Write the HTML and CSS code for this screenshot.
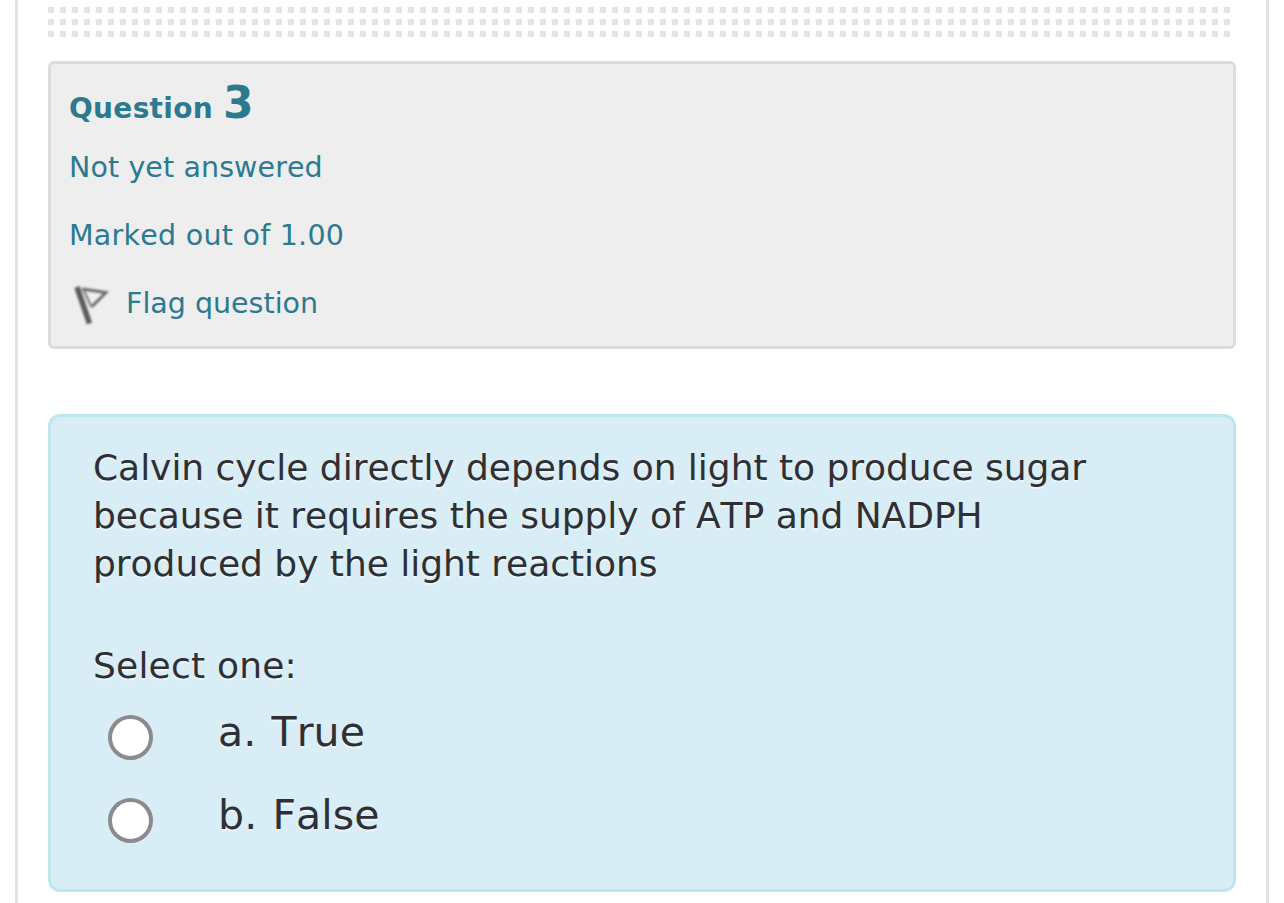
FILE: index.html
```html
<!DOCTYPE html>
<html lang="en">
<head>
  <meta charset="UTF-8">
  <meta name="viewport" content="width=device-width, initial-scale=1.0">
  <title>Quiz - Question 3</title>
  <link rel="stylesheet" href="styles.css">
</head>
<body>
  <main class="page">
    <div class="dots"></div>

    <section class="info">
      <h3 class="no">Question <span class="qno">3</span></h3>
      <div class="state">Not yet answered</div>
      <div class="grade">Marked out of 1.00</div>
      <div class="flag">
        <svg class="flag-icon" width="40" height="42" viewBox="0 0 40 42" fill="none">
          <path class="pole" d="M8 4 L20.5 40.5"/>
          <path class="cloth" d="M13 6 L37 9.5 L22.5 24"/>
          <path class="fold" d="M14 6 L22.5 24"/>
        </svg>
        <span class="flag-text">Flag question</span>
      </div>
    </section>

    <section class="formulation">
      <p class="qtext">Calvin cycle directly depends on light to produce sugar<br>because it requires the supply of ATP and NADPH<br>produced by the light reactions</p>
      <p class="prompt">Select one:</p>
      <div class="answer">
        <label class="option"><input type="radio" name="q3"><span class="option-text">a. True</span></label>
        <label class="option"><input type="radio" name="q3"><span class="option-text">b. False</span></label>
      </div>
    </section>
  </main>
</body>
</html>
```

FILE: styles.css
```css
* {
  box-sizing: border-box;
}
body {
  margin: 0;
  background: #fff;
  font-family: Verdana, "DejaVu Sans", sans-serif;
  font-kerning: none;
  color: #2f3033;
  overflow: hidden;
}
.page {
  width: 1254px;
  height: 903px;
  margin-left: 15px;
  padding: 7px 30px 0;
  border-left: 3px solid #e3e3e3;
  border-right: 3px solid #e3e3e3;
}
.dots {
  width: 1182px;
  height: 30px;
  background:
    repeating-linear-gradient(to bottom, transparent 0 6px, #fff 6px 12px),
    repeating-linear-gradient(to right, #e3e3e3 0 6px, #fff 6px 12px);
}
.info {
  height: 288px;
  margin-top: 24px;
  padding: 13px 18px 0;
  background: #eee;
  border: 3px solid #dcdcdc;
  border-radius: 6px;
  color: #2b7a90;
  font-size: 28.5px;
  line-height: 36px;
}
.no {
  height: 52px;
  margin: 0;
  font-size: 28px;
  line-height: 52px;
  letter-spacing: 0.3px;
}
.qno {
  font-size: 44px;
}
.state {
  margin-top: 21px;
  letter-spacing: 0.1px;
}
.grade {
  margin-top: 32px;
  letter-spacing: 0.25px;
}
.flag {
  display: flex;
  align-items: center;
  height: 42px;
  margin-top: 29px;
}
.flag-icon {
  margin-right: 17px;
  filter: blur(0.9px);
}
.pole {
  stroke: #5c5c5c;
  stroke-width: 5.5;
}
.cloth {
  stroke: #6a6a6a;
  stroke-width: 3;
}
.fold {
  stroke: #888;
  stroke-width: 2.5;
}
.formulation {
  height: 478px;
  margin-top: 65px;
  padding: 27px 42px 0;
  background: #d9edf6;
  border: 3px solid #bfe6ee;
  border-radius: 12px;
  text-shadow: 0 2px 0 rgba(255,255,255,0.5);
}
.qtext,
.prompt {
  margin: 0;
  font-size: 36px;
  line-height: 48px;
  letter-spacing: -0.03px;
}
.prompt {
  margin-top: 54px;
  letter-spacing: 0.2px;
}
.answer {
  margin-top: 25px;
}
.option {
  display: flex;
  height: 83px;
}
.option input {
  appearance: none;
  width: 45px;
  height: 45px;
  margin: 0 0 0 15px;
  border: 4px solid #8a8a8f;
  border-radius: 50%;
  background: #fff;
}
.option-text {
  margin-left: 65px;
  font-size: 41px;
  line-height: 34px;
  letter-spacing: 0.1px;
  word-spacing: 2px;
}
```
